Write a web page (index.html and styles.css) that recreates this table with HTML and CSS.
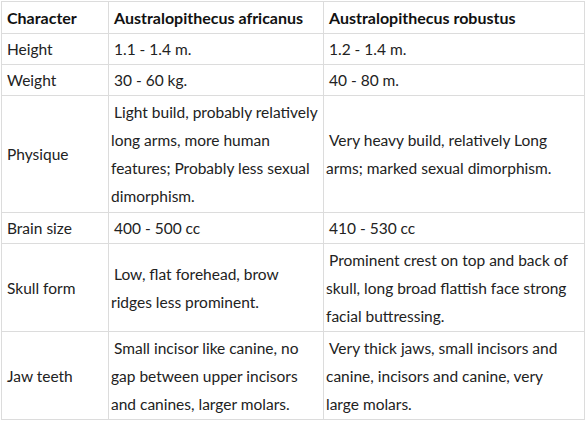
FILE: index.html
```html
<!DOCTYPE html>
<html>
<head>
<meta charset="utf-8">
<link rel="stylesheet" href="styles.css">
</head>
<body>
<table class="cmp">
  <colgroup>
    <col class="c1">
    <col class="c2">
    <col class="c3">
  </colgroup>
  <tr class="head">
    <th>Character</th>
    <th>Australopithecus africanus</th>
    <th>Australopithecus robustus</th>
  </tr>
  <tr class="one">
    <td>Height</td>
    <td>1.1 - 1.4 m.</td>
    <td>1.2 - 1.4 m.</td>
  </tr>
  <tr class="one">
    <td>Weight</td>
    <td>30 - 60 kg.</td>
    <td>40 - 80 m.</td>
  </tr>
  <tr class="four">
    <td>Physique</td>
    <td class="multi">Light build, probably relatively long arms, more human features; Probably less sexual dimorphism.</td>
    <td class="multi">Very heavy build, relatively Long arms; marked sexual dimorphism.</td>
  </tr>
  <tr class="one">
    <td>Brain size</td>
    <td>400 - 500 cc</td>
    <td>410 - 530 cc</td>
  </tr>
  <tr class="three">
    <td>Skull form</td>
    <td class="multi">Low, flat forehead, brow ridges less prominent.</td>
    <td class="multi">Prominent crest on top and back of skull, long broad flattish face strong facial buttressing.</td>
  </tr>
  <tr class="three">
    <td>Jaw teeth</td>
    <td class="multi">Small incisor like canine, no gap between upper incisors and canines, larger molars.</td>
    <td class="multi">Very thick jaws, small incisors and canine, incisors and canine, very large molars.</td>
  </tr>
</table>
</body>
</html>
```
FILE: styles.css
```css
html, body {
  margin: 0;
  padding: 0;
  background: #fff;
}
body {
  padding: 1px;
  font-family: Lato, "Liberation Sans", sans-serif;
  font-size: 15.5px;
  color: #222;
}
.cmp {
  border-collapse: collapse;
  width: 583px;
  table-layout: fixed;
}
.c1 { width: 107px; }
.c2 { width: 215px; }
.c3 { width: 261px; }
.cmp th, .cmp td {
  border: 1px solid #dcdcdc;
  padding: 0 0 0 2px;
  text-indent: 3px;
  text-align: left;
  vertical-align: middle;
  line-height: 20px;
}
.cmp th:nth-child(3), .cmp td:nth-child(3) {
  padding-right: 8px;
}
.cmp th {
  font-weight: bold;
  color: #111;
  font-size: 16px;
}
.cmp td.multi {
  line-height: 28px;
}
.head th { height: 31px; }
.one td { height: 30px; }
.four td { height: 116px; }
.three td { height: 87px; }
```
